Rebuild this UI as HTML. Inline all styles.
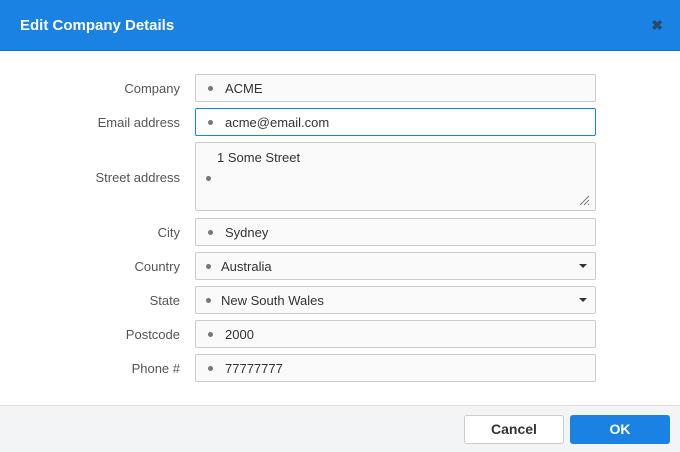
<!DOCTYPE html><html><head><style>
body{margin:0;width:680px;height:451px;font-family:"Liberation Sans",sans-serif;background:#fff;position:relative;overflow:hidden}
.h{position:absolute;left:0;top:0;width:680px;height:50px;background:#1a82e2;border-bottom:1px solid #1570c8}
.h span{position:absolute;left:20px;top:17px;color:#fff;font-weight:bold;font-size:15px}
.x{position:absolute;right:17px;top:17px;color:#2a4a6a;font-size:14px;font-weight:bold}
.l{position:absolute;right:500px;width:170px;text-align:right;color:#555;font-size:13px}
.f{position:absolute;left:195px;width:399px;height:26px;border:1px solid #ccc;border-radius:2px;background:#fafafa;font-size:13px;color:#333;box-sizing:content-box}
.f .d{position:absolute;left:12px;top:11px;width:5px;height:5px;border-radius:50%;background:#777}
.f .t{position:absolute;left:29px;top:6px}
.ar{position:absolute;right:8px;top:11px;border-left:4px solid transparent;border-right:4px solid transparent;border-top:4px solid #333}
.ft{position:absolute;left:0;top:405px;width:680px;height:46px;background:#f3f4f6;border-top:1px solid #ddd}
.b{position:absolute;top:9px;height:27px;width:98px;border-radius:3px;font-size:14px;font-weight:bold;text-align:center;line-height:27px}
</style></head><body>
<div class="h"><span>Edit Company Details</span><div class="x">✖</div></div>
<div class="l" style="top:81px">Company</div>
<div class="f" style="top:74px"><div class="d"></div><div class="t">ACME</div></div>
<div class="l" style="top:115px">Email address</div>
<div class="f" style="top:108px;border-color:#1a82e2;background:#fff"><div class="d"></div><div class="t">acme@email.com</div></div>
<div class="l" style="top:170px">Street address</div>
<div class="f" style="top:142px;height:67px"><div class="d" style="top:33px;left:10px"></div><div class="t" style="left:21px;top:7px">1 Some Street</div>
<svg style="position:absolute;right:5px;bottom:4px" width="12" height="12"><path d="M11 2L2 11M11 6L6 11M11 10L10 11" stroke="#777" stroke-width="1"/></svg></div>
<div class="l" style="top:225px">City</div>
<div class="f" style="top:218px"><div class="d"></div><div class="t">Sydney</div></div>
<div class="l" style="top:259px">Country</div>
<div class="f" style="top:252px"><div class="d" style="left:10px"></div><div class="t" style="left:25px">Australia</div><div class="ar"></div></div>
<div class="l" style="top:293px">State</div>
<div class="f" style="top:286px"><div class="d" style="left:10px"></div><div class="t" style="left:25px">New South Wales</div><div class="ar"></div></div>
<div class="l" style="top:327px">Postcode</div>
<div class="f" style="top:320px"><div class="d"></div><div class="t">2000</div></div>
<div class="l" style="top:361px">Phone #</div>
<div class="f" style="top:354px"><div class="d"></div><div class="t">77777777</div></div>
<div class="ft">
<div class="b" style="left:464px;background:#fff;border:1px solid #ccc;color:#333">Cancel</div>
<div class="b" style="left:570px;width:100px;height:29px;top:9px;background:#1a82e2;color:#fff;line-height:29px">OK</div>
</div>
</body></html>
